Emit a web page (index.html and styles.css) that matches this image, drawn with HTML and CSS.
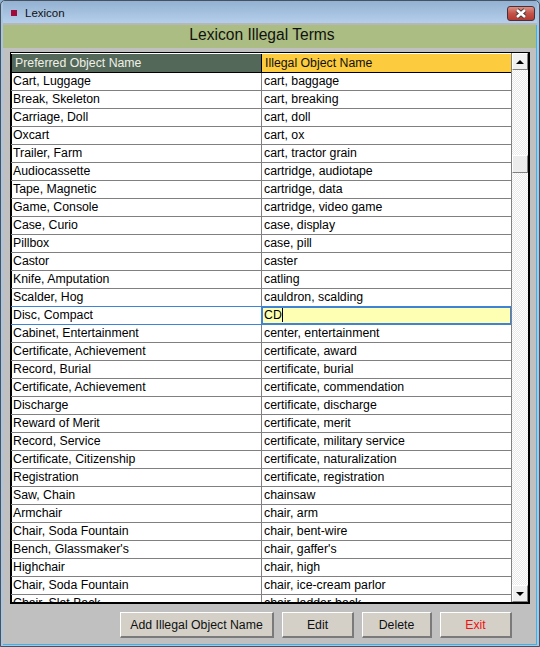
FILE: index.html
```html
<!DOCTYPE html>
<html lang="en">
<head>
<meta charset="utf-8">
<title>Lexicon</title>
<link rel="stylesheet" href="styles.css">
</head>
<body>
<div class="window">
  <div class="titlebar">
    <span class="app-icon"></span>
    <span class="title">Lexicon</span>
    <button class="close" aria-label="Close">
      <svg width="18" height="11" viewBox="0 0 18 11"><path d="M5 2 L13 9 M13 2 L5 9" stroke="#4a3a3a" stroke-width="4.4"/><path d="M5 2 L13 9 M13 2 L5 9" stroke="#fff" stroke-width="2.6"/></svg>
    </button>
  </div>
  <div class="client">
    <div class="banner">Lexicon Illegal Terms</div>
    <div class="gridframe">
      <div class="gridmain">
        <div class="row head"><div class="h1">Preferred Object Name</div><div class="h2">Illegal Object Name</div></div>
        <div class="rows">
          <div class="row"><div class="c1">Cart, Luggage</div><div class="c2">cart, baggage</div></div>
          <div class="row"><div class="c1">Break, Skeleton</div><div class="c2">cart, breaking</div></div>
          <div class="row"><div class="c1">Carriage, Doll</div><div class="c2">cart, doll</div></div>
          <div class="row"><div class="c1">Oxcart</div><div class="c2">cart, ox</div></div>
          <div class="row"><div class="c1">Trailer, Farm</div><div class="c2">cart, tractor grain</div></div>
          <div class="row"><div class="c1">Audiocassette</div><div class="c2">cartridge, audiotape</div></div>
          <div class="row"><div class="c1">Tape, Magnetic</div><div class="c2">cartridge, data</div></div>
          <div class="row"><div class="c1">Game, Console</div><div class="c2">cartridge, video game</div></div>
          <div class="row"><div class="c1">Case, Curio</div><div class="c2">case, display</div></div>
          <div class="row"><div class="c1">Pillbox</div><div class="c2">case, pill</div></div>
          <div class="row"><div class="c1">Castor</div><div class="c2">caster</div></div>
          <div class="row"><div class="c1">Knife, Amputation</div><div class="c2">catling</div></div>
          <div class="row marked"><div class="c1">Scalder, Hog</div><div class="c2">cauldron, scalding</div></div>
          <div class="row marked"><div class="c1">Disc, Compact</div><div class="c2 active"><span class="caret">CD</span></div></div>
          <div class="row"><div class="c1">Cabinet, Entertainment</div><div class="c2">center, entertainment</div></div>
          <div class="row"><div class="c1">Certificate, Achievement</div><div class="c2">certificate, award</div></div>
          <div class="row"><div class="c1">Record, Burial</div><div class="c2">certificate, burial</div></div>
          <div class="row"><div class="c1">Certificate, Achievement</div><div class="c2">certificate, commendation</div></div>
          <div class="row"><div class="c1">Discharge</div><div class="c2">certificate, discharge</div></div>
          <div class="row"><div class="c1">Reward of Merit</div><div class="c2">certificate, merit</div></div>
          <div class="row"><div class="c1">Record, Service</div><div class="c2">certificate, military service</div></div>
          <div class="row"><div class="c1">Certificate, Citizenship</div><div class="c2">certificate, naturalization</div></div>
          <div class="row"><div class="c1">Registration</div><div class="c2">certificate, registration</div></div>
          <div class="row"><div class="c1">Saw, Chain</div><div class="c2">chainsaw</div></div>
          <div class="row"><div class="c1">Armchair</div><div class="c2">chair, arm</div></div>
          <div class="row"><div class="c1">Chair, Soda Fountain</div><div class="c2">chair, bent-wire</div></div>
          <div class="row"><div class="c1">Bench, Glassmaker's</div><div class="c2">chair, gaffer's</div></div>
          <div class="row"><div class="c1">Highchair</div><div class="c2">chair, high</div></div>
          <div class="row"><div class="c1">Chair, Soda Fountain</div><div class="c2">chair, ice-cream parlor</div></div>
          <div class="row"><div class="c1">Chair, Slat Back</div><div class="c2">chair, ladder-back</div></div>
        </div>
      </div>
      <div class="scrollbar">
        <div class="sbtn"><span class="arrow up"></span></div>
        <div class="track"><div class="thumb"></div></div>
        <div class="sbtn"><span class="arrow down"></span></div>
      </div>
    </div>
    <div class="actions">
      <button class="btn add">Add Illegal Object Name</button>
      <button class="btn edit">Edit</button>
      <button class="btn delete">Delete</button>
      <button class="btn exit">Exit</button>
    </div>
  </div>
</div>
</body>
</html>
```
FILE: styles.css
```css
* { box-sizing: border-box; }
html, body { margin: 0; padding: 0; width: 540px; height: 647px; overflow: hidden; background: #8fb0d0; }
body { font-family: "Liberation Sans", Arial, sans-serif; }
.window { width: 540px; height: 647px; display: flex; flex-direction: column; border: 1px solid #46535f; border-radius: 5px 5px 0 0; background: #a9c5e2; padding: 0 2px 1px; }
.titlebar { height: 24px; flex: none; display: flex; align-items: center; padding: 2px 2px 0 8px; background: linear-gradient(#93b1d2, #b5cfeb); border-bottom: 2px solid #b4b8b8; }
.app-icon { width: 6px; height: 6px; background: #a00b3c; margin-right: 8px; }
.title { font-size: 11.5px; color: #111; flex: 1; }
.close { width: 28px; height: 15px; padding: 0; border: 1px solid #4a3036; border-radius: 3px; background: linear-gradient(#dc8f84, #c4544a 50%, #b23a32); display: flex; align-items: center; justify-content: center; }
.client { flex: 1; min-height: 0; display: flex; flex-direction: column; background: #c0c0c0; border-right: 1px solid #38b6e8; border-bottom: 1px solid #38b6e8; }
.banner { height: 23px; flex: none; background: #abbd82; text-align: center; font-size: 15.6px; line-height: 19px; color: #111; padding-right: 15px; }
.gridframe { margin: 4px 6px 0 7px; height: 552px; flex: none; display: flex; border: 2px solid #000; border-width: 1px 2px 2px 1px; background: #fff; }
.gridmain { width: 500px; flex: none; overflow: hidden; background: #fff; }
.rows { height: 532px; overflow: hidden; }
.row { display: flex; height: 18px; font-size: 12.3px; line-height: 17px; color: #000; border-bottom: 1px solid #808080; }
.marked { border-bottom-color: #3f83d6; }
.c1 { width: 251px; flex: none; padding-left: 1px; border-left: 1px solid #000; border-right: 1px solid #808080; white-space: nowrap; }
.c2 { flex: 1; padding-left: 2px; white-space: nowrap; }
.head { height: 20px; line-height: 19px; border-top: 1px solid #fff; border-bottom: 1px solid #000; }
.h1 { width: 251px; flex: none; padding-left: 3px; background: #536858; color: #f0f0e8; border-left: 1px solid #000; border-right: 1px solid #000; }
.h2 { flex: 1; padding-left: 3px; background: #fdcb3e; color: #111; }
.active { background: #ffffb4; outline: 2px solid #3f83d6; outline-offset: -1px; }
.caret { border-right: 1px solid #000; }
.scrollbar { flex: 1; display: flex; flex-direction: column; background-color: #f4f4f4; background-image: repeating-conic-gradient(#fff 0 25%, #e8e8e8 0 50%); background-size: 2px 2px; border-left: 1px solid #808080; }
.sbtn { height: 17px; flex: none; background: #f0f0f0; border: 1px solid; border-color: #fff #808080 #808080 #fff; display: flex; align-items: center; justify-content: center; }
.arrow { width: 0; height: 0; border-left: 4px solid transparent; border-right: 4px solid transparent; }
.up { border-bottom: 4px solid #000; }
.down { border-top: 4px solid #000; }
.track { flex: 1; padding-top: 85px; }
.thumb { height: 18px; background: #ececec; border: 1px solid; border-color: #fff #808080 #808080 #fff; }
.actions { display: flex; gap: 8px; padding: 8px 0 0 117px; }
.btn { height: 26px; padding: 0; font-family: inherit; font-size: 12.3px; color: #111; background: #d4d0c8; border: 1px solid; border-color: #fff #7a7a7a #7a7a7a #fff; border-width: 1px 2px 2px 1px; }
.add { width: 154px; }
.edit { width: 72px; }
.delete { width: 70px; }
.exit { width: 72px; color: #ee1111; }
```
